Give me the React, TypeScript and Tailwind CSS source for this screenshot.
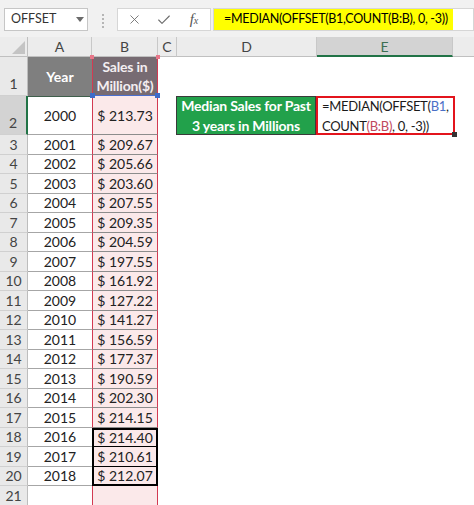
import React from "react";
import { X, Check } from "lucide-react";

const FONT = "font-['Lato','Open_Sans',sans-serif]";

const rows: [number, string][] = [
  [2001, "209.67"],
  [2002, "205.66"],
  [2003, "203.60"],
  [2004, "207.55"],
  [2005, "209.35"],
  [2006, "204.59"],
  [2007, "197.55"],
  [2008, "161.92"],
  [2009, "127.22"],
  [2010, "141.27"],
  [2011, "156.59"],
  [2012, "177.37"],
  [2013, "190.59"],
  [2014, "202.30"],
  [2015, "214.15"],
  [2016, "214.40"],
  [2017, "210.61"],
  [2018, "212.07"],
];

function FormulaBar() {
  return (
    <div className="flex h-[37px] items-start bg-[#f1f1f1] pt-[8px] pl-[4px]">
      {/* name box */}
      <div className="relative flex h-[23px] w-[84px] shrink-0 items-center border border-[#c6c6c6] bg-white pl-[6px] text-[12.5px] text-[#333]">
        OFFSET
        <svg className="absolute right-[3px] top-[8px]" width="8" height="5" viewBox="0 0 8 5">
          <path d="M0 0 L8 0 L4 5 Z" fill="#6b6b6b" />
        </svg>
      </div>
      {/* grip dots */}
      <div className="flex w-[29px] shrink-0 flex-col items-center gap-[2px] pt-[6px]">
        <span className="h-[2px] w-[2px] bg-[#b5b5b5]" />
        <span className="h-[2px] w-[2px] bg-[#b5b5b5]" />
        <span className="h-[2px] w-[2px] bg-[#b5b5b5]" />
        <span className="h-[2px] w-[2px] bg-[#b5b5b5]" />
      </div>
      {/* cancel / enter / function */}
      <div className="flex h-[23px] w-[94px] shrink-0 items-center border border-[#d6d6d6] bg-white">
        <div className="flex w-[32px] justify-center">
          <X size={15} strokeWidth={1.4} color="#6b6b6b" />
        </div>
        <div className="flex w-[28px] justify-center">
          <Check size={16} strokeWidth={1.6} color="#6b6b6b" />
        </div>
        <div className="flex w-[32px] justify-center font-['Liberation_Serif',serif] text-[15px] italic text-[#555]">
          f<span className="mb-[5px] self-end text-[10px] leading-none">x</span>
        </div>
      </div>
      {/* formula input */}
      <div className="ml-[2px] flex h-[23px] min-w-0 flex-1 overflow-hidden border border-[#d6d6d6] bg-white">
        <div className="flex h-full shrink-0 items-center whitespace-nowrap bg-[#ffff00] pl-[10px] pr-[5px] text-[12.5px] tracking-[-0.3px] text-black">
          =MEDIAN(OFFSET(B1,COUNT(B:B), 0, -3))
        </div>
      </div>
    </div>
  );
}

function ColHeader({ label, w, active }: { label: string; w: string; active?: boolean }) {
  return (
    <div
      className={`${w} flex shrink-0 items-center justify-center border-r border-[#c8c8c8] text-[14px] ${
        active
          ? "border-b-2 border-b-[#217346] bg-[#d3d3d3] text-[#3d6e52]"
          : "border-b border-b-[#c0c0c0] text-[#444]"
      }`}
    >
      {label}
    </div>
  );
}

function RowHead({ n, h, bottom, active }: { n: number; h: string; bottom?: boolean; active?: boolean }) {
  return (
    <div
      className={`${h} flex w-[28px] shrink-0 justify-center border-b border-b-[#d0d0d0] text-[14px] text-[#444] ${
        bottom ? "items-end pb-[1px]" : "items-center"
      } ${active ? "border-r-2 border-r-[#217346] bg-[#d3d3d3]" : "border-r border-r-[#bdbdbd] bg-[#e9e9e9]"}`}
    >
      {n}
    </div>
  );
}

export default function App() {
  return (
    <div className={`${FONT} h-[505px] w-[474px] overflow-hidden bg-white`}>
      <FormulaBar />

      {/* column headers */}
      <div className="flex h-[20px] bg-[#ececec]">
        <div className="relative w-[28px] shrink-0 border-r border-b border-[#c0c0c0]">
          <svg className="absolute bottom-[2px] right-[2px]" width="13" height="13" viewBox="0 0 13 13">
            <path d="M13 0 L13 13 L0 13 Z" fill="#c4c4c4" />
          </svg>
        </div>
        <ColHeader label="A" w="w-[64px]" />
        <ColHeader label="B" w="w-[66px]" />
        <ColHeader label="C" w="w-[19px]" />
        <ColHeader label="D" w="w-[140px]" />
        <ColHeader label="E" w="w-[136px]" active />
        <div className="flex-1 border-b border-[#c0c0c0]" />
      </div>

      {/* row 1: headings */}
      <div className="flex h-[39px]">
        <RowHead n={1} h="h-[39px]" bottom />
        <div className="flex w-[64px] shrink-0 items-center justify-center bg-[#7f7f7f] text-[14px] font-bold text-white">
          Year
        </div>
        <div className="relative flex w-[66px] shrink-0 flex-col items-center justify-center border-x border-x-[#d23a52] border-b border-b-[#4a6fd0] bg-[#776b72] text-[14px] font-bold leading-[19px] tracking-[-0.2px] text-[#f3eef1]">
          <span>Sales in</span>
          <span>Million($)</span>
          <span className="absolute -left-[3px] -top-[2px] h-[4px] w-[4px] bg-[#e8778a]" />
          <span className="absolute -right-[3px] -top-[2px] h-[4px] w-[4px] bg-[#e8778a]" />
          <span className="absolute -bottom-[3px] -left-[3px] h-[5px] w-[5px] bg-[#3e6cc9]" />
          <span className="absolute -bottom-[3px] -right-[3px] h-[5px] w-[5px] bg-[#3e6cc9]" />
        </div>
        <div className="flex-1" />
      </div>

      {/* row 2: first data row + result cells */}
      <div className="flex h-[39px]">
        <RowHead n={2} h="h-[39px]" bottom active />
        <div className="flex w-[64px] shrink-0 items-center justify-center border-b border-b-[#a6a6a6] border-t border-t-[#3f5f4c] text-[14px] text-[#222]">
          2000
        </div>
        <div className="flex w-[66px] shrink-0 items-center justify-center border-x border-x-[#d23a52] border-b border-b-[#8c8c8c] bg-[#fbe9ea] text-[14px] text-[#222]">
          $ 213.73
        </div>
        <div className="w-[18px] shrink-0" />
        <div className="flex w-[140px] shrink-0 flex-col items-center justify-center border border-[#3a3a3a] bg-[#22a14b] text-[14px] font-bold leading-[20px] tracking-[-0.2px] text-white">
          <span>Median Sales for Past</span>
          <span>3 years in Millions</span>
        </div>
        <div className="relative flex w-[139px] shrink-0 flex-col justify-center whitespace-nowrap border-2 border-[#e3141c] pl-[4px] text-[13px] leading-[20px] tracking-[-0.3px] text-[#1a1a1a]">
          <span>
            =MEDIAN(OFFSET(<span className="text-[#4b6fc7]">B1</span>,
          </span>
          <span>
            COUNT<span className="text-[#c0485c]">(B:B)</span>, 0, -3))
          </span>
          <span className="absolute -bottom-[4px] -right-[4px] h-[5px] w-[5px] bg-[#333]" />
        </div>
        <div className="flex-1" />
      </div>

      {/* rows 3..20 */}
      {rows.map(([year, sales], i) => {
        const rowNo = i + 3;
        const boxed = rowNo >= 18;
        const first = rowNo === 18;
        const last = rowNo === 20;
        return (
          <div key={rowNo} className="flex h-[19.5px]">
            <RowHead n={rowNo} h="h-[19.5px]" />
            <div className="flex w-[64px] shrink-0 items-center justify-center border-b border-b-[#a6a6a6] text-[14px] text-[#222]">
              {year}
            </div>
            <div
              className={`flex w-[66px] shrink-0 items-center justify-center bg-[#fbe9ea] text-[14px] text-[#222] ${
                boxed
                  ? `border-x-2 border-x-black ${first ? "border-t-2 border-t-black" : ""} ${
                      last ? "border-b-2 border-b-black" : "border-b border-b-black"
                    }`
                  : "border-x border-x-[#d23a52] border-b border-b-[#8c8c8c]"
              }`}
            >
              $ {sales}
            </div>
            <div className="flex-1" />
          </div>
        );
      })}

      {/* row 21 */}
      <div className="flex h-[19.5px]">
        <RowHead n={21} h="h-[19.5px]" />
        <div className="w-[64px] shrink-0" />
        <div className="w-[66px] shrink-0 border-x border-x-[#d23a52] bg-[#fbe9ea]" />
        <div className="flex-1" />
      </div>
    </div>
  );
}
